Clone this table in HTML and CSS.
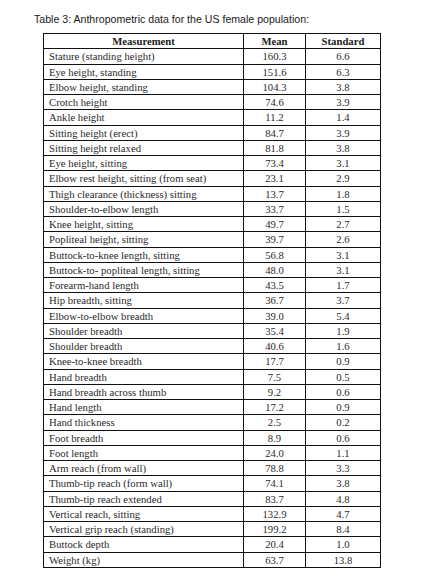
FILE: index.html
```html
<!DOCTYPE html>
<html>
<head>
<meta charset="utf-8">
<link rel="stylesheet" href="styles.css">
</head>
<body>
<p class="caption">Table 3: Anthropometric data for the US female population:</p>
<table class="data">
<thead>
<tr><th class="c-name">Measurement</th><th class="c-mean">Mean</th><th class="c-std">Standard</th></tr>
</thead>
<tbody>
<tr><td>Stature (standing height)</td><td>160.3</td><td>6.6</td></tr>
<tr><td>Eye height, standing</td><td>151.6</td><td>6.3</td></tr>
<tr><td>Elbow height, standing</td><td>104.3</td><td>3.8</td></tr>
<tr><td>Crotch height</td><td>74.6</td><td>3.9</td></tr>
<tr><td>Ankle height</td><td>11.2</td><td>1.4</td></tr>
<tr><td>Sitting height (erect)</td><td>84.7</td><td>3.9</td></tr>
<tr><td>Sitting height relaxed</td><td>81.8</td><td>3.8</td></tr>
<tr><td>Eye height, sitting</td><td>73.4</td><td>3.1</td></tr>
<tr><td>Elbow rest height, sitting (from seat)</td><td>23.1</td><td>2.9</td></tr>
<tr><td>Thigh clearance (thickness) sitting</td><td>13.7</td><td>1.8</td></tr>
<tr><td>Shoulder-to-elbow length</td><td>33.7</td><td>1.5</td></tr>
<tr><td>Knee height, sitting</td><td>49.7</td><td>2.7</td></tr>
<tr><td>Popliteal height, sitting</td><td>39.7</td><td>2.6</td></tr>
<tr><td>Buttock-to-knee length, sitting</td><td>56.8</td><td>3.1</td></tr>
<tr><td>Buttock-to- popliteal length, sitting</td><td>48.0</td><td>3.1</td></tr>
<tr><td>Forearm-hand length</td><td>43.5</td><td>1.7</td></tr>
<tr><td>Hip breadth, sitting</td><td>36.7</td><td>3.7</td></tr>
<tr><td>Elbow-to-elbow breadth</td><td>39.0</td><td>5.4</td></tr>
<tr><td>Shoulder breadth</td><td>35.4</td><td>1.9</td></tr>
<tr><td>Shoulder breadth</td><td>40.6</td><td>1.6</td></tr>
<tr><td>Knee-to-knee breadth</td><td>17.7</td><td>0.9</td></tr>
<tr><td>Hand breadth</td><td>7.5</td><td>0.5</td></tr>
<tr><td>Hand breadth across thumb</td><td>9.2</td><td>0.6</td></tr>
<tr><td>Hand length</td><td>17.2</td><td>0.9</td></tr>
<tr><td>Hand thickness</td><td>2.5</td><td>0.2</td></tr>
<tr><td>Foot breadth</td><td>8.9</td><td>0.6</td></tr>
<tr><td>Foot length</td><td>24.0</td><td>1.1</td></tr>
<tr><td>Arm reach (from wall)</td><td>78.8</td><td>3.3</td></tr>
<tr><td>Thumb-tip reach (form wall)</td><td>74.1</td><td>3.8</td></tr>
<tr><td>Thumb-tip reach extended</td><td>83.7</td><td>4.8</td></tr>
<tr><td>Vertical reach, sitting</td><td>132.9</td><td>4.7</td></tr>
<tr><td>Vertical grip reach (standing)</td><td>199.2</td><td>8.4</td></tr>
<tr><td>Buttock depth</td><td>20.4</td><td>1.0</td></tr>
<tr><td>Weight (kg)</td><td>63.7</td><td>13.8</td></tr>
</tbody>
</table>
</body>
</html>
```
FILE: styles.css
```css
html, body {
  margin: 0;
  padding: 0;
  background: #ffffff;
}
body {
  padding: 13px 0 0 34px;
}
.caption {
  margin: 0 0 7px 0;
  font-family: "Liberation Sans", Arial, sans-serif;
  font-size: 10.6px;
  line-height: 13px;
  color: #1a1a1a;
}
.data {
  margin-left: 9px;
  border-collapse: collapse;
  table-layout: fixed;
  font-family: "Liberation Serif", "Times New Roman", serif;
  font-size: 10.7px;
  color: #2a2a2a;
}
.data tr {
  height: 15.25px;
}
.data th, .data td {
  border: 1px solid #111111;
  padding: 0 5px;
  line-height: 12px;
  white-space: nowrap;
}
.data th {
  font-weight: bold;
  text-align: center;
  color: #1a1a1a;
}
.data td {
  text-align: center;
}
.data td:first-child {
  text-align: left;
}
.c-name { width: 189px; }
.c-mean { width: 51px; }
.c-std { width: 64px; }
```
